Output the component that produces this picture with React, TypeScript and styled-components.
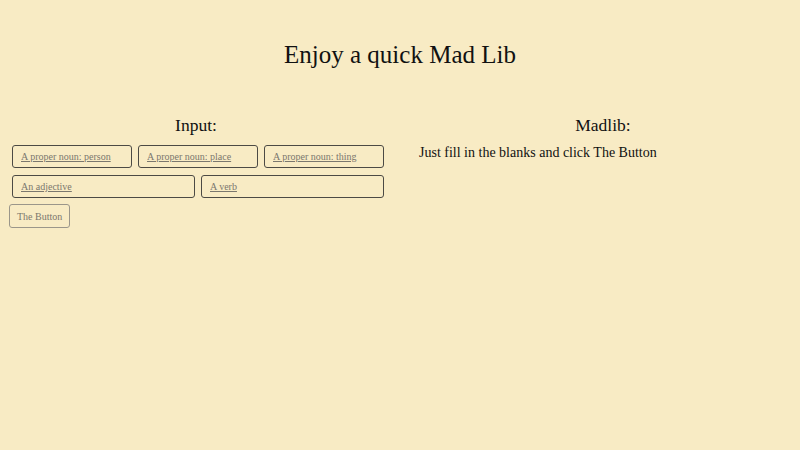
import React from "react";
import styled, { createGlobalStyle } from "styled-components";

const GlobalStyle = createGlobalStyle`
  html, body {
    background: #f8ebc4;
  }
  body {
    margin: 8px;
    font-family: "Liberation Serif", "Times New Roman", serif;
    color: #111;
  }
`;

const Title = styled.h1`
  text-align: center;
  font-size: 25px;
  font-weight: 400;
  margin: 33px 0 46px;
`;

const Columns = styled.div`
  display: grid;
  grid-template-columns: 376px 1fr;
  column-gap: 30px;
`;

const Column = styled.section``;

const ColumnTitle = styled.h2`
  text-align: center;
  font-size: 17.5px;
  font-weight: 400;
  margin: 0 0 9px;
`;

const Fields = styled.div<{ $cols: number }>`
  display: grid;
  grid-template-columns: repeat(${(p) => p.$cols}, 1fr);
  gap: 6px;
  margin: 0 0 7px;
  padding: 0 0 0 4px;
`;

const Field = styled.input`
  box-sizing: border-box;
  width: 100%;
  height: 23px;
  padding: 0 8px;
  border: 1.5px solid #4c4a44;
  border-radius: 3px;
  background: transparent;
  font-family: "Liberation Serif", "Times New Roman", serif;
  font-size: 10px;
  &::placeholder {
    color: #7a776e;
    text-decoration: underline;
  }
`;

const Button = styled.button`
  margin: -1px 0 0 1px;
  height: 24px;
  padding: 0 7px;
  border: 1px solid #9b968a;
  border-radius: 3px;
  background: transparent;
  color: #7a776e;
  font-family: "Liberation Serif", "Times New Roman", serif;
  font-size: 10px;
`;

const Story = styled.p`
  margin: 0 0 0 5px;
  font-size: 14px;
`;

export default function App() {
  return (
    <>
      <GlobalStyle />
      <Title>Enjoy a quick Mad Lib</Title>
      <Columns>
        <Column>
          <ColumnTitle>Input:</ColumnTitle>
          <Fields $cols={3}>
            <Field placeholder="A proper noun: person" />
            <Field placeholder="A proper noun: place" />
            <Field placeholder="A proper noun: thing" />
          </Fields>
          <Fields $cols={2}>
            <Field placeholder="An adjective" />
            <Field placeholder="A verb" />
          </Fields>
          <Button>The Button</Button>
        </Column>
        <Column>
          <ColumnTitle>Madlib:</ColumnTitle>
          <Story>Just fill in the blanks and click The Button</Story>
        </Column>
      </Columns>
    </>
  );
}
